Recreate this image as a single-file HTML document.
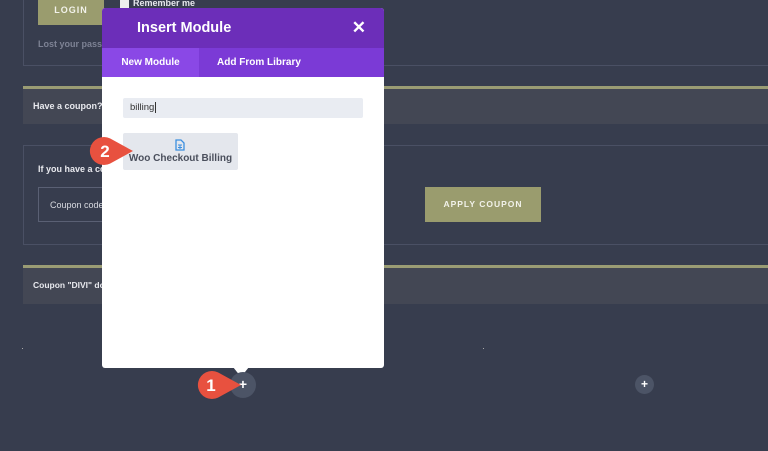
<!DOCTYPE html>
<html><head><meta charset="utf-8"><style>
*{margin:0;padding:0;box-sizing:border-box}
body{width:768px;height:451px;overflow:hidden;background:#373d4e;font-family:"Liberation Sans",sans-serif;position:relative}
.a{position:absolute}
.t{color:#e8e9ee;font-weight:bold;font-size:9px;white-space:nowrap}
</style></head><body>
<div class="a" style="left:23px;top:-2px;width:760px;height:68px;border:1px solid #4a5064"></div>
<div class="a" style="left:38px;top:-2px;width:66px;height:27px;background:#9a9c6e;color:#f2f2ea;font-size:9px;font-weight:bold;letter-spacing:1px;text-align:center;line-height:24px">LOGIN</div>
<div class="a" style="left:120px;top:0px;width:9px;height:8px;background:#eee"></div>
<div class="a t" style="left:133px;top:-2px">Remember me</div>
<div class="a" style="left:38px;top:39px;color:#7d8294;font-size:9px;font-weight:bold">Lost your password?</div>

<div class="a" style="left:23px;top:86px;width:760px;height:38px;background:#434754;border-top:3px solid #9a9c74"></div>
<div class="a t" style="left:33px;top:101px">Have a coupon? Click here to enter your code</div>

<div class="a" style="left:23px;top:145px;width:760px;height:100px;border:1px solid #4a5064"></div>
<div class="a t" style="left:38px;top:164px">If you have a coupon code, please apply it below.</div>
<div class="a" style="left:38px;top:187px;width:320px;height:35px;border:1px solid #5a6074"></div>
<div class="a" style="left:50px;top:200px;color:#d8dae0;font-size:9px">Coupon code</div>
<div class="a" style="left:425px;top:187px;width:116px;height:35px;background:#9a9c6e;color:#f2f2ea;font-size:8.5px;font-weight:bold;letter-spacing:1px;text-align:center;line-height:35px">APPLY COUPON</div>

<div class="a" style="left:23px;top:265px;width:760px;height:39px;background:#434754;border-top:3px solid #9a9c74"></div>
<div class="a t" style="left:33px;top:280px;font-size:8.5px">Coupon "DIVI" does not exist!</div>
<div class="a" style="left:22px;top:348px;width:1px;height:1px;background:#aaa"></div>
<div class="a" style="left:483px;top:348px;width:1px;height:1px;background:#aaa"></div>

<!-- modal -->
<div class="a" style="left:102px;top:8px;width:282px;height:360px;background:#fff;border-radius:3px;overflow:hidden">
 <div style="height:40px;background:#6c2eb9;color:#fff;font-size:14.5px;font-weight:bold;padding:12px 0 0 35px">Insert Module<span style="position:absolute;right:18px;top:10px;font-size:17px;font-weight:bold">✕</span></div>
 <div style="height:29px;background:#7b3ad6;color:#fff;font-size:10px;font-weight:bold;position:relative">
  <div style="position:absolute;left:0;top:0;width:97px;height:29px;background:#8a48e6;text-align:center;line-height:29px">New Module</div>
  <div style="position:absolute;left:115px;top:0;line-height:29px">Add From Library</div>
 </div>
 <div class="a" style="left:21px;top:90px;width:240px;height:20px;background:#e9ecf2;border-radius:2px;color:#333;font-size:9.5px;line-height:20px;padding-left:7px">billing<span style="border-left:1px solid #333;margin-left:1px"></span></div>
 <div class="a" style="left:21px;top:125px;width:115px;height:37px;background:#e4e7ed;border-radius:2px;text-align:center;color:#4a4f5c;font-size:10px;font-weight:bold">
  <svg width="10" height="12" viewBox="0 0 10 12" style="margin-top:6px;display:block;margin-left:52px"><path d="M1 1h5l3 3v7H1z" fill="none" stroke="#3b8fe0" stroke-width="1.3"/><path d="M3 6h4M3 8.5h4M5 6v4" stroke="#3b8fe0" stroke-width="1"/></svg>
  <div style="margin-top:2px">Woo Checkout Billing</div>
 </div>
</div>
<div class="a" style="left:233px;top:367px;width:0;height:0;border-left:8px solid transparent;border-right:8px solid transparent;border-top:10px solid #fff"></div>

<div class="a" style="left:230px;top:372px;width:26px;height:26px;border-radius:50%;background:#4c5466;color:#fff;font-size:14px;font-weight:bold;text-align:center;line-height:25px">+</div>
<div class="a" style="left:635px;top:375px;width:19px;height:19px;border-radius:50%;background:#4c5466;color:#fff;font-size:12px;font-weight:bold;text-align:center;line-height:19px">+</div>

<!-- badges -->
<svg class="a" style="left:196px;top:369px" width="48" height="32" viewBox="0 0 48 32"><path d="M16 2a14 14 0 1 0 6 26.6L45 16 22 3.4A14 14 0 0 0 16 2z" fill="#e8513f"/><text x="15" y="22" fill="#fff" font-family="Liberation Sans" font-size="17" font-weight="bold" text-anchor="middle">1</text></svg>
<svg class="a" style="left:88px;top:135px" width="48" height="32" viewBox="0 0 48 32"><path d="M16 2a14 14 0 1 0 6 26.6L45 16 22 3.4A14 14 0 0 0 16 2z" fill="#e8513f"/><text x="17" y="22" fill="#fff" font-family="Liberation Sans" font-size="17" font-weight="bold" text-anchor="middle">2</text></svg>
</body></html>
